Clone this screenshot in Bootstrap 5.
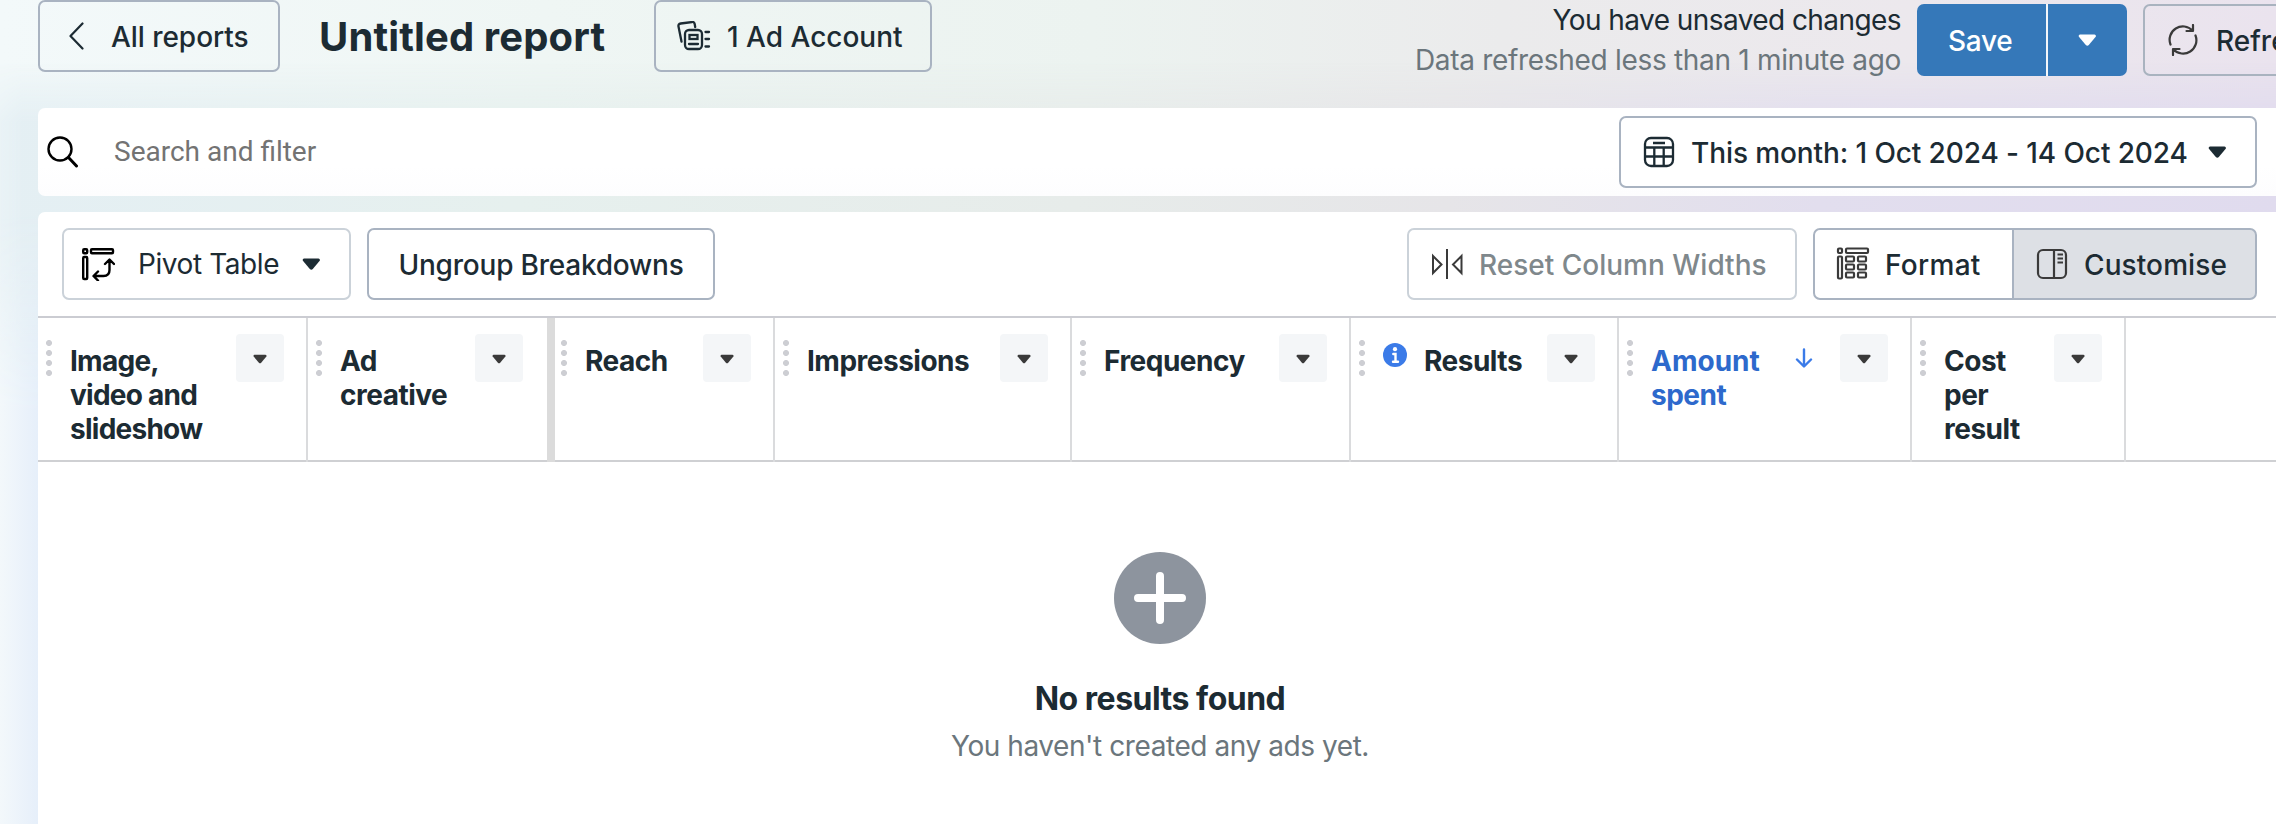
<!DOCTYPE html>
<html lang="en">
<head>
<meta charset="utf-8">
<title>Untitled report</title>
<link href="https://cdn.jsdelivr.net/npm/bootstrap@5.3.0/dist/css/bootstrap.min.css" rel="stylesheet">
<style>
:root{--ink:#1c2b33;--muted:#6b767c;--line:#cbccd2}
html,body{height:100%}
body{font-family:Inter,"Noto Sans",sans-serif;font-size:28px;color:var(--ink);overflow:hidden;
 background:linear-gradient(90deg,#f3f9fa 0,#eff6f4 24%,#ecf3f0 48%,#ebebec 66%,#ece8ed 84%,#eae3ee 100%)}
svg{display:block;flex:none;fill:none}
svg:not([stroke]){stroke:currentColor}
.page{width:2282px;height:824px;padding-left:38px}
.topbar{height:108px;position:relative}
.topbar>*{flex:none}
.shade{background:linear-gradient(90deg,#e4eff4 0,#e6f0ee 24%,#e7ecea 48%,#e6e5e8 64%,#e2deee 80%,#e0dbee 100%)}
.glow{position:absolute;left:-38px;right:0;top:62px;height:762px;-webkit-mask-image:linear-gradient(#0000,#000 60px),linear-gradient(90deg,#0000,#000 60px);-webkit-mask-composite:source-in;mask-composite:intersect}
.sidefade{background:linear-gradient(90deg,#f3f8fb,#e6effa 38px,#e6effa);position:absolute;left:0;top:212px;bottom:0;width:44px;-webkit-mask-image:linear-gradient(#0000,#000 200px)}
.ctl{height:72px;border:2px solid #a9b3c1;border-radius:7px;display:flex;align-items:center;line-height:68px;padding:2px 0 0;font-size:28px;font-weight:450;color:var(--ink);white-space:nowrap;text-align:left;--bs-btn-border-width:2px}
.ctl svg{margin-top:-2px}
.soft{border-color:#cbd2d9}
.doc-title{font-size:40px;font-weight:700;line-height:72px;letter-spacing:.12px;margin:1px 0 0 39px}
.status{line-height:40px;white-space:nowrap}
.save{background:#3578b9;color:#fff;border:0;line-height:72px}
.surface{background:#fff;position:relative}
.search-card{height:88px;border-radius:7px 0 0 7px;background:linear-gradient(#fff 65%,#fdfdfe)}
.report-card{height:612px;margin-top:16px;border-radius:7px 0 0 0}
.colhead{height:146px;border-top:2px solid var(--line);border-bottom:2px solid #cfd0d3}
.colcell{border-right:2px solid #dadbdd;padding:16px 22px 0 32px;position:relative;font-weight:700;line-height:34px;flex:none;display:flex;height:144px;letter-spacing:-.5px}
.colcell .label{padding-top:10px;flex:1;white-space:nowrap}
.grip{position:absolute;left:8px;top:22px;width:6px;height:36px;background:radial-gradient(circle at 3px 3px,#cdced3 2.6px,#0000 3.4px) 0 0/6px 10px}
.drop{width:48px;height:48px;border-radius:4px;background:#f4f6f8;color:#3a3a3a;display:flex;align-items:center;justify-content:center;padding:1px 0 0;border:0}
.empty-title{font-size:32px;font-weight:700;line-height:40px;letter-spacing:-.5px}
</style>
</head>
<body>
<svg width="0" height="0" class="position-absolute"><defs>
<path id="caret" d="M2 .5h14.500q2 .5 1.200 2.300L10.800 11q-1.500 1.600-3 0L.9 2.800Q.2.9 2 .5Z" fill="currentColor" stroke="none"/>
</defs></svg>
<div class="page position-relative">
 <div class="glow shade"></div>
 <div class="sidefade" style="left:0"></div>

 <header class="topbar d-flex align-items-start">
  <button class="btn ctl" style="width:242px"><svg width="16" height="28" style="margin-left:28px" stroke-width="2.200"><path d="M14.500 1.500 2.500 14l12 12.500" stroke-linecap="round" stroke-linejoin="round"/></svg><span style="margin-left:27px;letter-spacing:-.05px">All reports</span></button>
  <h1 class="doc-title" style="width:335px">Untitled report</h1>
  <button class="btn ctl" style="width:278px"><svg width="34" height="30" style="margin-left:21px" stroke-width="2.300" stroke-linecap="round"><path d="M4.500 20.500 1.500 5.500Q1 3 3.700 2.500L15 1q2.200-.3 2.700 2l.5 3"/><rect x="8" y="9" width="17" height="19" rx="4"/><rect x="12.500" y="14" width="8" height="4"/><path d="M12 23h9M28.500 11h3.500M28.500 18h3.500M28.500 25.500h3.500"/></svg><span style="margin-left:16px">1 Ad Account</span></button>
  <div class="status text-end" style="width:969px"><div style="letter-spacing:-.57px">You have unsaved changes</div><div style="letter-spacing:-.31px;color:var(--muted)">Data refreshed less than 1 minute ago</div></div>
  <div class="btn-group mt-1" style="margin-left:16px">
   <button class="btn ctl save" style="width:130px;flex:none;padding-left:31px;letter-spacing:-.3px">Save</button>
   <button class="btn ctl save justify-content-center" style="width:81px;flex:none;border-left:2px solid #f3f6fa" aria-label="More save options"><svg width="19" height="12"><use href="#caret"/></svg></button>
  </div>
  <button class="btn ctl mt-1" style="width:190px;margin-left:16px;border-color:#a9b3bf"><svg width="32" height="32" style="margin-left:22px;color:#3a3a3a" stroke-width="2.200" stroke-linecap="round" stroke-linejoin="round"><path d="M3.500 20.500A13.300 13.300 0 0 1 25.500 6.500M28.500 11.500a13.300 13.300 0 0 1-22 14M26 1v6h-6.500M6 31v-6h6.500"/></svg><span style="margin-left:17px">Refresh</span></button>
 </header>

 <section class="surface search-card d-flex align-items-center">
  <svg width="32" height="32" style="margin-left:9px;color:#000" stroke-width="2.400" stroke-linecap="round"><circle cx="13" cy="13" r="11.500"/><path d="m21.500 21.500 8 8.500" stroke-width="3"/></svg>
  <span class="flex-grow-1" style="margin-left:35px;font-family:Roboto,sans-serif;color:#737373;margin-top:-1px">Search and filter</span>
  <button class="btn ctl bg-white" style="width:638px;margin-right:25px"><svg width="32" height="32" style="margin-left:22px" stroke-width="2.300"><rect x="2" y="2" width="28" height="28" rx="6"/><path d="M2 11.500h28M2 20.500h28M11.300 11.500V30M20.700 11.500V30M10 7h12"/></svg><span style="margin-left:16px;letter-spacing:-.1px;width:497px">This month: 1 Oct 2024 - 14 Oct 2024</span><svg width="19" height="12" style="margin-left:20px"><use href="#caret"/></svg></button>
 </section>

 <section class="surface report-card">
  <div class="d-flex" style="padding:16px 25px 16px 24px;height:104px">
   <button class="btn ctl soft" style="width:289px"><svg width="34" height="34" style="margin-left:17px;color:#000" stroke-width="2.400" stroke-linecap="round" stroke-linejoin="round"><rect x="2.200" y="2.200" width="4" height="4" rx="1"/><rect x="10" y="2.200" width="22" height="4" rx="1"/><rect x="2.200" y="10" width="4" height="22" rx="1"/><path d="M28.500 13v10q0 6-6 6H13M24 17l4.500-4.500L33 17M17 24.500 12.500 29l4.500 4.500"/></svg><span style="margin-left:23px;font-weight:400;letter-spacing:-.42px;margin-top:-2px">Pivot Table</span><svg width="19" height="12" style="margin-left:23px"><use href="#caret"/></svg></button>
   <button class="btn ctl justify-content-center" style="width:348px;margin-left:16px;letter-spacing:-.22px">Ungroup Breakdowns</button>
   <button class="btn ctl soft ms-auto" style="width:390px;color:#7f888c"><svg width="34" height="32" style="margin-left:22px;color:#3a3a3a" stroke-width="2"><path d="M16 1v30M2 8v17l8.500-8.500ZM30.500 8v17L22 16.500Z"/></svg><span style="margin-left:14px">Reset Column Widths</span></button>
   <div class="btn-group" style="margin-left:16px">
    <button class="btn ctl" style="width:201px;flex:none"><svg width="34" height="34" style="margin-left:21px;color:#3a3a3a" stroke-width="2.200"><rect x="2" y="1.500" width="4" height="4.500" rx="1"/><rect x="10" y="1.500" width="22" height="4.500" rx="1"/><rect x="2" y="9.500" width="4" height="22" rx="1"/><rect x="10" y="9.500" width="8" height="5" rx="1"/><rect x="22" y="9.500" width="8" height="5" rx="1"/><rect x="10" y="17.500" width="8" height="5" rx="1"/><rect x="22" y="17.500" width="8" height="5" rx="1"/><rect x="10" y="25.500" width="8" height="5" rx="1"/><rect x="22" y="25.500" width="8" height="5" rx="1"/></svg><span style="margin-left:15px;letter-spacing:.3px">Format</span></button>
    <button class="btn ctl" style="width:245px;flex:none;margin-left:-2px;background:#dde0e5"><svg width="32" height="32" style="margin-left:22px;color:#3a3a3a" stroke-width="2.200"><rect x="2" y="2" width="28" height="28" rx="5"/><path d="M18 2v28M21.500 6.500H27M21.500 10.500H27M21.500 14.500H27"/></svg><span style="margin-left:16px;letter-spacing:.1px">Customise</span></button>
   </div>
  </div>

  <div class="colhead d-flex">
   <div class="colcell" style="width:270px"><i class="grip"></i><div class="label" style="letter-spacing:-.74px">Image,<br>video and<br>slideshow</div><button class="drop"><svg width="14" height="10" viewBox="0 0 18.500 12.200"><use href="#caret"/></svg></button></div>
   <div class="colcell" style="width:247px;border-right:8px solid #dbdbdb;padding-right:24px"><i class="grip"></i><div class="label">Ad<br>creative</div><button class="drop"><svg width="14" height="10" viewBox="0 0 18.500 12.200"><use href="#caret"/></svg></button></div>
   <div class="colcell" style="width:220px;padding-left:30px"><i class="grip" style="left:6px"></i><div class="label">Reach</div><button class="drop"><svg width="14" height="10" viewBox="0 0 18.500 12.200"><use href="#caret"/></svg></button></div>
   <div class="colcell" style="width:297px"><i class="grip"></i><div class="label">Impressions</div><button class="drop"><svg width="14" height="10" viewBox="0 0 18.500 12.200"><use href="#caret"/></svg></button></div>
   <div class="colcell" style="width:279px"><i class="grip"></i><div class="label">Frequency</div><button class="drop"><svg width="14" height="10" viewBox="0 0 18.500 12.200"><use href="#caret"/></svg></button></div>
   <div class="colcell" style="width:268px"><i class="grip"></i><svg width="24" height="24" stroke="none" style="margin:9px 17px 0 0"><circle cx="12" cy="12" r="12" fill="#3b7be8"/><circle cx="12" cy="6.200" r="2.100" fill="#fff"/><path d="M10.300 11h2.200V18.500M10 18.800h5" stroke="#fff" stroke-width="2.400" stroke-linecap="round"/></svg><div class="label">Results</div><button class="drop"><svg width="14" height="10" viewBox="0 0 18.500 12.200"><use href="#caret"/></svg></button></div>
   <div class="colcell" style="width:293px;color:#2d69cc"><i class="grip"></i><div class="label" style="letter-spacing:0">Amount<br><span style="letter-spacing:-.5px">spent</span></div><svg width="18" height="20" stroke="#3b7be8" stroke-width="2.400" stroke-linecap="round" stroke-linejoin="round" style="margin:14px 27px 0 0"><path d="M9 1.500V18M2 11.500l7 7 7-7"/></svg><button class="drop"><svg width="14" height="10" viewBox="0 0 18.500 12.200"><use href="#caret"/></svg></button></div>
   <div class="colcell" style="width:214px"><i class="grip"></i><div class="label">Cost<br>per<br>result</div><button class="drop"><svg width="14" height="10" viewBox="0 0 18.500 12.200"><use href="#caret"/></svg></button></div>
  </div>

  <div class="d-flex flex-column align-items-center" style="padding-top:90px">
   <svg width="92" height="92" stroke="none"><circle cx="46" cy="46" r="46" fill="#8d949e"/><path d="M46 24v44M24 46h44" stroke="#fff" stroke-width="8" stroke-linecap="round"/></svg>
   <div class="empty-title" style="margin-top:35px">No results found</div>
   <div style="line-height:42px;color:var(--muted);margin-top:6px;letter-spacing:-.43px">You haven't created any ads yet.</div>
  </div>
 </section>
</div>
<script src="https://cdn.jsdelivr.net/npm/bootstrap@5.3.0/dist/js/bootstrap.bundle.min.js"></script>
</body>
</html>
